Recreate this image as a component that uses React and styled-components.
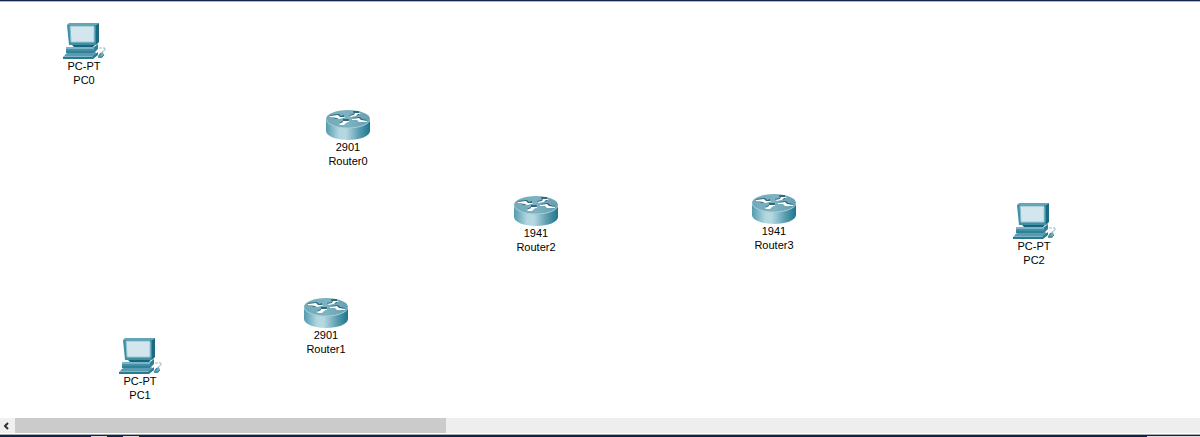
import React from 'react';
import styled, { createGlobalStyle } from 'styled-components';

const devices = [
  { kind: 'pc', model: 'PC-PT', name: 'PC0', x: 84, y: 20 },
  { kind: 'router', model: '2901', name: 'Router0', x: 348, y: 107 },
  { kind: 'router', model: '1941', name: 'Router2', x: 536, y: 193 },
  { kind: 'router', model: '1941', name: 'Router3', x: 774, y: 191 },
  { kind: 'pc', model: 'PC-PT', name: 'PC2', x: 1034, y: 200 },
  { kind: 'router', model: '2901', name: 'Router1', x: 326, y: 295 },
  { kind: 'pc', model: 'PC-PT', name: 'PC1', x: 140, y: 335 },
];

const GlobalStyle = createGlobalStyle`
  * {
    box-sizing: border-box;
  }
  body {
    margin: 0;
    background-color: #fff;
    font-family: 'Liberation Sans', Arial, sans-serif;
  }
`;
const Workspace = styled.div`
  display: flex;
  flex-direction: column;
  min-height: 100vh;
  border-top: 1px solid #14264f;
`;
const Canvas = styled.main`
  flex: 1;
  position: relative;
  overflow: hidden;
  border-top: 1px solid #b4b4bc;
  background-color: #fff;
`;
const Device = styled.figure`
  position: absolute;
  left: ${({ $x }) => $x}px;
  top: ${({ $y }) => $y}px;
  margin: 0;
  transform: translateX(-50%);
  display: flex;
  flex-direction: column;
  align-items: center;

  svg {
    display: block;
  }
`;
const Caption = styled.figcaption`
  display: flex;
  flex-direction: column;
  align-items: center;
  font-size: 11px;
  line-height: 14px;
  color: #000;
  white-space: nowrap;
`;
const ScrollBar = styled.div`
  display: flex;
  height: 15px;
  background-color: #eee;
`;
const ScrollButton = styled.button`
  display: flex;
  align-items: center;
  justify-content: center;
  width: 15px;
  padding: 0 3px 0 0;
  border: 0;
  background-color: #f0f0f0;
`;
const Track = styled.div`
  flex: 1;
`;
const Thumb = styled.div`
  width: 36.4%;
  height: 100%;
  background-color: #cbcbcb;
`;
const BottomPanel = styled.footer`
  display: flex;
  flex-direction: column;
  justify-content: flex-end;
  height: 4px;
  border-top: 1px solid #fff;
  background-color: #0b2350;

  &:before {
    content: '';
    height: 1px;
    margin-bottom: auto;
    background-color: #aaa;
  }
`;
const PanelTop = styled.div`
  display: flex;
  gap: 16px;
  padding-left: 91px;
`;
const PanelPiece = styled.div`
  width: ${({ $wide }) => ($wide ? 53 : 16)}px;
  height: 1px;
  margin-left: ${({ $wide }) => ($wide ? 'auto' : 0)};
  background-color: #dcdce8;
`;

const PcIcon = () => (
  <svg width="44" height="37" viewBox="0 0 44 37" aria-hidden="true">
    <path d="M5 3 7 1h30l-3 2z" fill="#65a5b8" />
    <path d="m34 3 3-2v19l-3 3z" fill="#196b82" />
    <path d="M5 3h29v20H7z" fill="#3d8fa6" />
    <path d="M8 4h24v16H9z" fill="#d3e6ed" />
    <path d="M8 4h24M8 4l1 16" fill="none" stroke="#8abccb" />
    <path d="M9 20h23V5" fill="none" stroke="#a3cbd7" />
    <path d="M10 23h23l-2 2H12z" fill="#17647b" />
    <path d="M4 25h28l4-3v5l-4 4H4z" fill="#2d8198" />
    <path d="M4 25h28v2H4z" fill="#7cb5c5" />
    <path d="M4 28h28" stroke="#5aa0b4" />
    <path d="M5 31h31l-5 4H1z" fill="#80b6c5" />
    <path d="M5 31h29M3 33h30" fill="none" stroke="#358299" />
    <path d="M1 35h29l6-5v3l-5 4H1z" fill="#287a91" />
    <path d="M37 26h3m1 0h2v2l-3 2" fill="none" stroke="#9dbdc6" />
    <path d="m36 34 2-3 3-1 1 3-2 3h-4z" fill="#70a9b9" />
    <path d="m37 34 2-3m-3 4h4l2-2" fill="none" stroke="#367f94" />
  </svg>
);

const RouterIcon = () => (
  <svg width="44" height="31" viewBox="0 0 44 31" aria-hidden="true">
    <defs>
      <linearGradient id="routerSide">
        <stop offset="0" stopColor="#539bad" />
        <stop offset=".3" stopColor="#b2d7e0" />
        <stop offset=".45" stopColor="#b5d9e1" />
        <stop offset=".75" stopColor="#5c9db0" />
        <stop offset="1" stopColor="#1b758d" />
      </linearGradient>
      <linearGradient id="routerTop">
        <stop offset="0" stopColor="#70aaba" />
        <stop offset=".5" stopColor="#7db2c1" />
        <stop offset="1" stopColor="#659fb1" />
      </linearGradient>
    </defs>
    <path d="M0 10v12c0 5 10 9 22 9s22-4 22-9V10z" fill="url(#routerSide)" />
    <ellipse cx="22" cy="10" rx="22" ry="9" fill="url(#routerTop)" />
    <path d="M0 10c0 5 10 9 22 9s22-4 22-9" fill="none" stroke="#a8cfda" />
    <g fill="#32687a">
      <path d="m4 6 9-1 2 2 3-1v4l-5-1-3 1-5-2z" />
      <path d="m23 6 5-1-1-3 6 0v4l-3 1-6 1z" />
      <path d="m26 9 8-1 2 2 5 1-1 1-8-1-3-1z" />
      <path d="m13 14 4-2 0-2h6l-1 4-3-1-2 2z" />
    </g>
    <g fill="#fff">
      <path d="m4 7 8-1 2 2 4 0 1 1-6 1-2-1-7-1z" />
      <path d="m23 7 5-1 1-2h4l2 1-3 0-2 2-5 1z" />
      <path d="m26 10 7-1 2 2 6 1v1l-8 0-2-2-5 0z" />
      <path d="m13 15 4-2 0-1h6v1l-3 1-2 2h-4z" />
    </g>
  </svg>
);

const App = () => (
  <>
    <GlobalStyle />
    <Workspace>
      <Canvas>
        {devices.map(({ kind, model, name, x, y }) => (
          <Device key={name} $x={x} $y={y}>
            {kind === 'pc' ? <PcIcon /> : <RouterIcon />}
            <Caption>
              <span>{model}</span>
              <span>{name}</span>
            </Caption>
          </Device>
        ))}
      </Canvas>
      <ScrollBar>
        <ScrollButton type="button" aria-label="Scroll left">
          <svg width="6" height="8" viewBox="0 0 6 8" aria-hidden="true">
            <path d="M5 1 2 4l3 3" fill="none" stroke="#333" strokeWidth="2" />
          </svg>
        </ScrollButton>
        <Track>
          <Thumb />
        </Track>
      </ScrollBar>
      <BottomPanel>
        <PanelTop>
          <PanelPiece />
          <PanelPiece />
          <PanelPiece $wide />
        </PanelTop>
      </BottomPanel>
    </Workspace>
  </>
);

export default App;
